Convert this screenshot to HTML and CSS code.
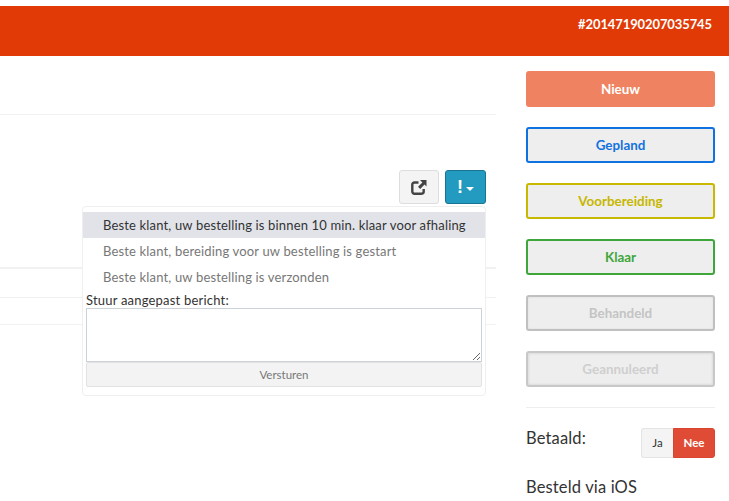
FILE: index.html
```html
<!DOCTYPE html>
<html lang="nl">
<head>
<meta charset="utf-8">
<title>Bestelling</title>
<link rel="stylesheet" href="styles.css">
</head>
<body>
<header class="topbar"><span class="order-no">#20147190207035745</span></header>
<div class="layout">
  <main class="main">
    <div class="intro"></div>
    <div class="toolbar">
      <button class="tool tool-default" type="button" aria-label="Openen">
        <svg width="16" height="15" viewBox="0 0 16 15"><path d="M7.500 2.500H3.400A2.100 2.100 0 0 0 1.300 4.600v7a2.100 2.100 0 0 0 2.100 2.100h7.200a2.100 2.100 0 0 0 2.100-2.100V9" fill="none" stroke="#444" stroke-width="2.400"/><path d="M9 0h6.500v6.500l-2-2-4.300 4.500-2.200-2.200 4.400-4.400z" fill="#444"/></svg>
      </button>
      <button class="tool tool-info" type="button" aria-label="Melding"><span class="bang">!</span><span class="caret"></span></button>
    </div>
    <div class="rows">
      <div class="row row-a"></div>
      <div class="row row-b"></div>
      <div class="row row-c"></div>
    </div>
    <div class="popover">
      <ul class="msgs">
        <li class="msg msg-active">Beste klant, uw bestelling is binnen 10 min. klaar voor afhaling</li>
        <li class="msg">Beste klant, bereiding voor uw bestelling is gestart</li>
        <li class="msg">Beste klant, uw bestelling is verzonden</li>
      </ul>
      <label class="custom-label" for="bericht">Stuur aangepast bericht:</label>
      <textarea class="custom-text" id="bericht"></textarea>
      <button class="send" type="button">Versturen</button>
    </div>
  </main>
  <aside class="side">
    <div class="states">
      <button class="state state-new" type="button">Nieuw</button>
      <button class="state state-planned" type="button">Gepland</button>
      <button class="state state-prep" type="button">Voorbereiding</button>
      <button class="state state-ready" type="button">Klaar</button>
      <button class="state state-done" type="button">Behandeld</button>
      <button class="state state-cancel" type="button">Geannuleerd</button>
    </div>
    <hr class="divider">
    <div class="paid">
      <span class="paid-label">Betaald:</span>
      <div class="toggle"><span class="toggle-yes">Ja</span><span class="toggle-no">Nee</span></div>
    </div>
    <p class="via">Besteld via iOS</p>
  </aside>
</div>
</body>
</html>
```
FILE: styles.css
```css
* { box-sizing: border-box; }
html, body { margin: 0; height: 501px; overflow: hidden; background: #fff; }
body { padding-top: 6px; font-family: "Lato", "Noto Sans", sans-serif; color: #333; }
.topbar { height: 50px; background: #e13a06; display: flex; justify-content: flex-end; padding: 8px 17px 0 0; }
.order-no { color: #fff; font-weight: 700; font-size: 13px; line-height: 20px; letter-spacing: -0.1px; }
.layout { display: flex; }
.main { width: 496px; position: relative; }
.intro { height: 59px; border-bottom: 1px solid #f1f1f1; }
.toolbar { display: flex; justify-content: flex-end; gap: 6px; padding: 55px 10px 0 0; }
.tool { height: 34px; border-radius: 3px; border: 1px solid; padding: 0; display: flex; align-items: center; justify-content: center; }
.tool-default { width: 40px; background: #f4f4f4; border-color: #ddd; }
.tool-info { width: 41px; background: #239ac0; border-color: #1a7391; color: #fff; gap: 3px; }
.bang { font-weight: 900; font-size: 18px; line-height: 18px; }
.caret { width: 0; height: 0; border-left: 4px solid transparent; border-right: 4px solid transparent; border-top: 4px solid #fff; margin-top: 3px; }
.rows { margin-top: 63px; }
.row { border-bottom: 1px solid #f1f1f1; }
.row-a { height: 2px; background: #f1f1f1; }
.row-b { height: 29px; }
.row-c { height: 27px; }
.popover { position: absolute; left: 82px; top: 150px; width: 404px; height: 190px; background: #fff; border: 1px solid #efefef; border-radius: 4px; padding: 5px 3px 0; }
.msgs { list-style: none; margin: 0 -3px; padding: 0; }
.msg { height: 26px; line-height: 26px; padding-left: 20px; font-size: 13px; letter-spacing: 0.16px; color: #777; white-space: nowrap; }
.msg-active { background: #e1e3e9; color: #333; }
.custom-label { display: block; margin-top: 3px; font-size: 13px; letter-spacing: 0.2px; line-height: 15px; color: #333; }
.custom-text { display: block; width: 396px; height: 54px; margin: 0; padding: 0; border: 1px solid #ccd2da; border-radius: 0; background: #fff; }
.send { display: block; width: 396px; height: 25px; padding: 0; border: 1px solid #e2e2e2; border-radius: 2px; background: #f3f3f3; color: #777; font-family: inherit; font-size: 11.500px; }
.side { width: 189px; margin-left: 30px; padding-top: 15px; }
.states { display: flex; flex-direction: column; gap: 20px; }
.state { height: 36px; border-radius: 3px; border: 2px solid; background: #eee; font-family: inherit; font-size: 13.400px; font-weight: 700; padding: 0; }
.state-new { background: #ef8260; border-color: #ef8260; color: #fff; }
.state-planned { border-color: #0f72e0; color: #1273de; }
.state-prep { border-color: #c8b900; color: #c6b700; }
.state-ready { border-color: #3ea63a; color: #40a63c; }
.state-done { border-color: #c0c0c0; color: #c4c4c4; box-shadow: inset 0 0 2px rgba(0,0,0,.1); }
.state-cancel { border-color: #c8c8c8; color: #cfcfcf; box-shadow: inset 0 0 3px rgba(0,0,0,.15); }
.divider { margin: 20px 0 0; border: 0; border-top: 1px solid #eee; }
.paid { display: flex; justify-content: space-between; margin-top: 20px; }
.paid-label { font-size: 16.500px; letter-spacing: 0.15px; line-height: 20px; }
.toggle { display: flex; width: 74px; height: 30px; font-size: 11.500px; line-height: 28px; text-align: center; }
.toggle-yes { width: 32px; background: #f4f4f4; border: 1px solid #e4e4e4; border-right: 0; border-radius: 3px 0 0 3px; }
.toggle-no { width: 42px; background: #e04b35; border: 1px solid #d9452f; border-radius: 0 3px 3px 0; color: #fff; font-weight: 700; }
.via { margin: 19px 0 0; font-size: 16.500px; letter-spacing: 0.15px; line-height: 20px; }
```
